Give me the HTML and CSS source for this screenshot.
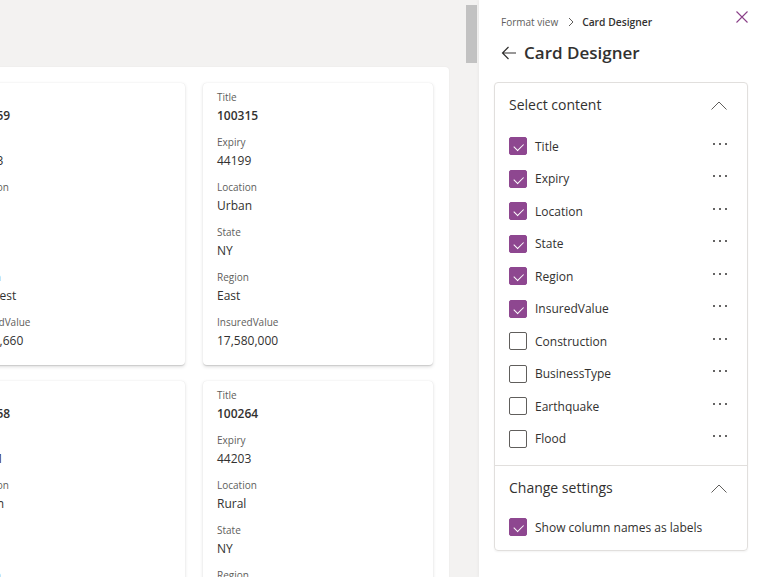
FILE: index.html
```html
<!DOCTYPE html>
<html>
<head>
<meta charset="utf-8">
<link rel="stylesheet" href="styles.css">
</head>
<body>
<div class="app">
  <div class="main">
    <div class="canvas">
      <div class="board">
        <div class="card">
          <div class="field"><div class="lbl">Title</div><div class="val strong">100259</div></div>
          <div class="field"><div class="lbl">Expiry</div><div class="val">44203</div></div>
          <div class="field"><div class="lbl">Location</div><div class="val">Rural</div></div>
          <div class="field"><div class="lbl">State</div><div class="val">NY</div></div>
          <div class="field"><div class="lbl">Region</div><div class="val">Midwest</div></div>
          <div class="field"><div class="lbl">InsuredValue</div><div class="val">8,916,660</div></div>
        </div>
        <div class="card">
          <div class="field"><div class="lbl">Title</div><div class="val strong">100315</div></div>
          <div class="field"><div class="lbl">Expiry</div><div class="val">44199</div></div>
          <div class="field"><div class="lbl">Location</div><div class="val">Urban</div></div>
          <div class="field"><div class="lbl">State</div><div class="val">NY</div></div>
          <div class="field"><div class="lbl">Region</div><div class="val">East</div></div>
          <div class="field"><div class="lbl">InsuredValue</div><div class="val">17,580,000</div></div>
        </div>
        <div class="card">
          <div class="field"><div class="lbl">Title</div><div class="val strong">100258</div></div>
          <div class="field"><div class="lbl">Expiry</div><div class="val">44201</div></div>
          <div class="field"><div class="lbl">Location</div><div class="val">Urban</div></div>
          <div class="field"><div class="lbl">State</div><div class="val">NY</div></div>
          <div class="field"><div class="lbl">Region</div><div class="val">East</div></div>
          <div class="field"><div class="lbl">InsuredValue</div><div class="val">5,120,000</div></div>
        </div>
        <div class="card">
          <div class="field"><div class="lbl">Title</div><div class="val strong">100264</div></div>
          <div class="field"><div class="lbl">Expiry</div><div class="val">44203</div></div>
          <div class="field"><div class="lbl">Location</div><div class="val">Rural</div></div>
          <div class="field"><div class="lbl">State</div><div class="val">NY</div></div>
          <div class="field"><div class="lbl">Region</div><div class="val">East</div></div>
          <div class="field"><div class="lbl">InsuredValue</div><div class="val">3,250,000</div></div>
        </div>
      </div>
    </div>
    <div class="rail"><div class="thumb"></div></div>
  </div>
  <aside class="panel">
    <div class="crumbs">
      <div class="crumb-text"><span class="crumb-muted">Format view</span>
        <svg class="crumb-sep" width="8" height="10" viewBox="0 0 8 10"><path d="M2 1 L6 5 L2 9" fill="none" stroke="#605e5c" stroke-width="1"/></svg>
        <span class="crumb-cur">Card Designer</span></div>
      <svg class="close" width="12" height="12" viewBox="0 0 12 12"><path d="M0.5 0.5 L11.5 11.5 M11.5 0.5 L0.5 11.5" stroke="#8a3f88" stroke-width="1.1" fill="none"/></svg>
    </div>
    <div class="title-row">
      <svg class="back" width="16" height="14" viewBox="0 0 16 14"><path d="M15 7 H1.5 M7.5 1 L1.5 7 L7.5 13" fill="none" stroke="#323130" stroke-width="1.2"/></svg>
      <h1 class="title">Card Designer</h1>
    </div>
    <div class="box">
      <section class="sec sec-content">
        <div class="sec-head"><span>Select content</span>
          <svg class="chev" width="16" height="9" viewBox="0 0 16 9"><path d="M0.5 8.5 L8 1 L15.5 8.5" fill="none" stroke="#605e5c" stroke-width="1"/></svg>
        </div>
        <div class="row"><span class="cb on"></span><span class="rl">Title</span><span class="more"><i></i><i></i><i></i></span></div>
        <div class="row"><span class="cb on"></span><span class="rl">Expiry</span><span class="more"><i></i><i></i><i></i></span></div>
        <div class="row"><span class="cb on"></span><span class="rl">Location</span><span class="more"><i></i><i></i><i></i></span></div>
        <div class="row"><span class="cb on"></span><span class="rl">State</span><span class="more"><i></i><i></i><i></i></span></div>
        <div class="row"><span class="cb on"></span><span class="rl">Region</span><span class="more"><i></i><i></i><i></i></span></div>
        <div class="row"><span class="cb on"></span><span class="rl">InsuredValue</span><span class="more"><i></i><i></i><i></i></span></div>
        <div class="row"><span class="cb"></span><span class="rl">Construction</span><span class="more"><i></i><i></i><i></i></span></div>
        <div class="row"><span class="cb"></span><span class="rl">BusinessType</span><span class="more"><i></i><i></i><i></i></span></div>
        <div class="row"><span class="cb"></span><span class="rl">Earthquake</span><span class="more"><i></i><i></i><i></i></span></div>
        <div class="row"><span class="cb"></span><span class="rl">Flood</span><span class="more"><i></i><i></i><i></i></span></div>
      </section>
      <section class="sec sec-settings">
        <div class="sec-head"><span>Change settings</span>
          <svg class="chev" width="16" height="9" viewBox="0 0 16 9"><path d="M0.5 8.5 L8 1 L15.5 8.5" fill="none" stroke="#605e5c" stroke-width="1"/></svg>
        </div>
        <div class="row row-set"><span class="cb on"></span><span class="rl">Show column names as labels</span></div>
      </section>
    </div>
  </aside>
</div>
</body>
</html>
```
FILE: styles.css
```css
* { box-sizing: border-box; }
html, body { margin: 0; padding: 0; height: 100%; overflow: hidden; }
body { font-family: "Open Sans", "Noto Sans", sans-serif; color: #323130; background: #fff; }

.app { display: flex; height: 577px; width: 768px; overflow: hidden; }

.main { width: 479px; flex: none; background: #f3f2f1; display: flex; overflow: hidden; }
.canvas { flex: 1; overflow: hidden; }
.rail { width: 13px; flex: none; padding-top: 5px; }
.thumb { width: 11px; height: 58px; background: #c2c2c2; }

.board {
  margin-top: 67px;
  margin-left: -61px;
  width: 510px;
  background: #fff;
  border-radius: 4px;
  padding: 16px;
  display: grid;
  grid-template-columns: 230px 230px;
  column-gap: 18px;
  row-gap: 16px;
  box-shadow: 0 0 2px rgba(0,0,0,0.06);
}
.card {
  height: 282px;
  background: #fff;
  border-radius: 4px;
  padding: 6px 14px 6px 14px;
  box-shadow: 0 1.6px 3.6px rgba(0,0,0,0.13), 0 0.3px 0.9px rgba(0,0,0,0.11);
}
.field { margin-bottom: 7px; }
.lbl { font-size: 10px; line-height: 16px; color: #605e5c; }
.val { font-size: 12px; line-height: 22px; color: #323130; }
.val.strong { font-weight: 600; }

.panel {
  width: 289px;
  flex: none;
  background: #fff;
  padding: 0 20px 0 15px;
  box-shadow: -1px 0 3px rgba(0,0,0,0.04);
}
.crumbs { display: flex; justify-content: space-between; align-items: flex-start; padding-left: 7px; padding-top: 14px; height: 30px; }
.crumb-text { display: flex; align-items: center; font-size: 10px; line-height: 16px; }
.crumb-muted { color: #605e5c; }
.crumb-sep { margin: 0 7px 0 9px; }
.crumb-cur { color: #323130; font-weight: 600; font-size: 10.3px; }
.close { margin-top: -3px; }

.title-row { display: flex; align-items: center; padding-left: 7px; height: 46px; }
.back { margin-right: 7px; }
.title { margin: 0; font-size: 17px; font-weight: 600; line-height: 28px; color: #323130; }

.box { margin-top: 6px; border: 1px solid #e1dfdd; border-radius: 4px; box-shadow: 0 1px 2px rgba(0,0,0,0.05); }
.sec { padding: 0 20px 0 14px; }
.sec-content { padding-bottom: 10px; border-bottom: 1px solid #e1dfdd; }
.sec-settings { padding-bottom: 9px; }
.sec-head { height: 47px; padding-top: 12px; display: flex; align-items: flex-start; justify-content: space-between; font-size: 14px; line-height: 19px; color: #323130; }
.chev { margin-top: 6px; }
.row { height: 32.5px; display: flex; align-items: center; }
.row-set { height: 28px; }
.cb { width: 18px; height: 18px; border: 1px solid #605e5c; border-radius: 2px; flex: none; margin-right: 8px; position: relative; }
.cb.on { background: #8e4790; border-color: #8e4790; }
.cb.on::after {
  content: ""; position: absolute; left: 4px; top: 5px; width: 8px; height: 4.5px;
  border-left: 1.3px solid #fff; border-bottom: 1.3px solid #fff; transform: rotate(-45deg); transform-origin: center;
}
.rl { font-size: 12px; color: #323130; flex: 1; }
.more { display: flex; gap: 4px; margin-top: -5px; }
.more i { width: 2px; height: 2px; border-radius: 1px; background: #323130; display: block; }
```
